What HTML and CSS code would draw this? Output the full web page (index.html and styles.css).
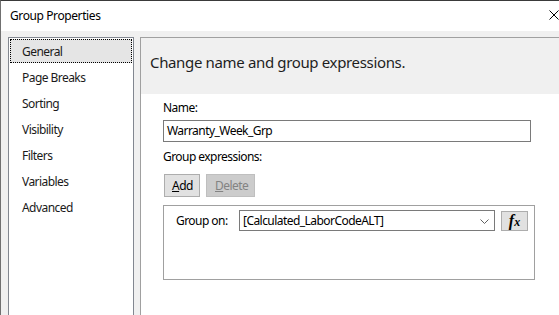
FILE: index.html
```html
<!DOCTYPE html>
<html>
<head>
<meta charset="utf-8">
<link rel="stylesheet" href="styles.css">
</head>
<body>
<div class="window">
  <div class="titlebar">
    <span class="title">Group Properties</span>
    <svg class="close" width="10" height="10" viewBox="0 0 10 10"><path d="M0.5 0.5 L9.5 9.5 M9.5 0.5 L0.5 9.5" stroke="#000" stroke-width="1" fill="none"/></svg>
  </div>
  <div class="content">
    <ul class="nav">
      <li class="item selected">General</li>
      <li class="item">Page Breaks</li>
      <li class="item">Sorting</li>
      <li class="item">Visibility</li>
      <li class="item">Filters</li>
      <li class="item">Variables</li>
      <li class="item">Advanced</li>
    </ul>
    <div class="panel">
      <div class="panel-head">Change name and group expressions.</div>
      <div class="panel-body">
        <div class="label">Name:</div>
        <div class="textbox">Warranty_Week_Grp</div>
        <div class="label label-gap">Group expressions:</div>
        <div class="buttons">
          <div class="btn btn-add"><u>A</u>dd</div>
          <div class="btn disabled"><u>D</u>elete</div>
        </div>
        <div class="groupbox">
          <div class="row">
            <span class="row-label">Group on:</span>
            <div class="select">
              <span>[Calculated_LaborCodeALT]</span>
              <svg class="chev" width="9" height="5" viewBox="0 0 9 5"><path d="M0.5 0.5 L4.5 4.5 L8.5 0.5" stroke="#606060" stroke-width="1" fill="none"/></svg>
            </div>
            <div class="fx"><span class="f">f</span><span class="x">x</span></div>
          </div>
        </div>
      </div>
    </div>
  </div>
</div>
</body>
</html>
```
FILE: styles.css
```css
html, body {
  margin: 0;
  padding: 0;
}
body {
  width: 559px;
  height: 315px;
  overflow: hidden;
  background: #f0f0f0;
  font-family: "Noto Sans", "Liberation Sans", sans-serif;
  font-size: 12px;
  letter-spacing: -0.55px;
  color: #000;
}
.window {
  width: 559px;
  height: 315px;
  overflow: hidden;
  border-top: 1px solid #3a3a3a;
  border-left: 1px solid #707070;
  box-sizing: border-box;
  background: #f0f0f0;
}
.titlebar {
  height: 30px;
  background: #fff;
  display: flex;
  align-items: center;
  justify-content: space-between;
}
.title {
  padding-left: 9px;
  line-height: 16px;
  letter-spacing: -0.4px;
}
.close {
  margin-top: -2px;
}
.content {
  display: flex;
  padding: 6px 0 0 7px;
  gap: 6px;
}
.nav {
  list-style: none;
  margin: 0;
  padding: 1px;
  width: 122px;
  height: 300px;
  border: 1px solid #828790;
  background: #fff;
}
.item {
  height: 24px;
  line-height: 24px;
  margin-bottom: 2px;
  padding-left: 11px;
  border: 1px solid transparent;
  box-sizing: border-box;
  color: #1a1a1a;
}
.item.selected {
  background: #e5e5e5;
  border: 1px dotted #000;
}
.panel {
  flex: 1;
  margin-right: -40px;
  height: 300px;
  border-top: 1px solid #a0a0a0;
  border-left: 1px solid #a0a0a0;
  display: flex;
  flex-direction: column;
}
.panel-head {
  height: 56px;
  box-sizing: border-box;
  padding: 13px 0 0 9px;
  font-size: 15px;
  letter-spacing: -0.35px;
  line-height: 22px;
  color: #1e1e1e;
  background: #f0f0f0;
}
.panel-body {
  flex: 1;
  background: #fff;
  padding: 6px 0 0 22px;
}
.label {
  line-height: 16px;
  height: 16px;
}
.label-gap {
  margin-top: 7px;
}
.textbox {
  margin-top: 4px;
  width: 368px;
  height: 22px;
  box-sizing: border-box;
  border: 1px solid #7a7a7a;
  padding-left: 3px;
  line-height: 19px;
}
.buttons {
  display: flex;
  gap: 6px;
  margin-top: 9px;
  padding-left: 1px;
}
.btn {
  height: 23px;
  box-sizing: border-box;
  border: 1px solid #adadad;
  background: #e1e1e1;
  line-height: 21px;
  padding: 0 7px;
}
.btn-add {
  width: 36px;
  padding: 0 0 0 7px;
}
.btn.disabled {
  width: 49px;
  padding-left: 8px;
  background: #cccccc;
  border-color: #bfbfbf;
  color: #838383;
}
.groupbox {
  margin-top: 8px;
  width: 372px;
  height: 75px;
  box-sizing: border-box;
  border: 1px solid #a0a0a0;
  padding: 4px 0 0 12px;
}
.row {
  display: flex;
  align-items: center;
}
.row-label {
  width: 63px;
}
.select {
  width: 256px;
  height: 21px;
  box-sizing: border-box;
  border: 1px solid #7a7a7a;
  display: flex;
  align-items: center;
  justify-content: space-between;
  padding: 0 5px 0 3px;
}
.chev {
  margin-top: 1px;
}
.fx {
  margin-left: 6px;
  width: 27px;
  height: 20px;
  box-sizing: border-box;
  border: 1px solid #adadad;
  background: #e1e1e1;
  display: flex;
  align-items: center;
  justify-content: center;
  font-family: "Liberation Serif", serif;
  font-style: italic;
  font-weight: bold;
  letter-spacing: 0;
  color: #000;
}
.fx .f {
  font-size: 16px;
}
.fx .x {
  font-size: 12px;
  margin-top: 3px;
}
```
